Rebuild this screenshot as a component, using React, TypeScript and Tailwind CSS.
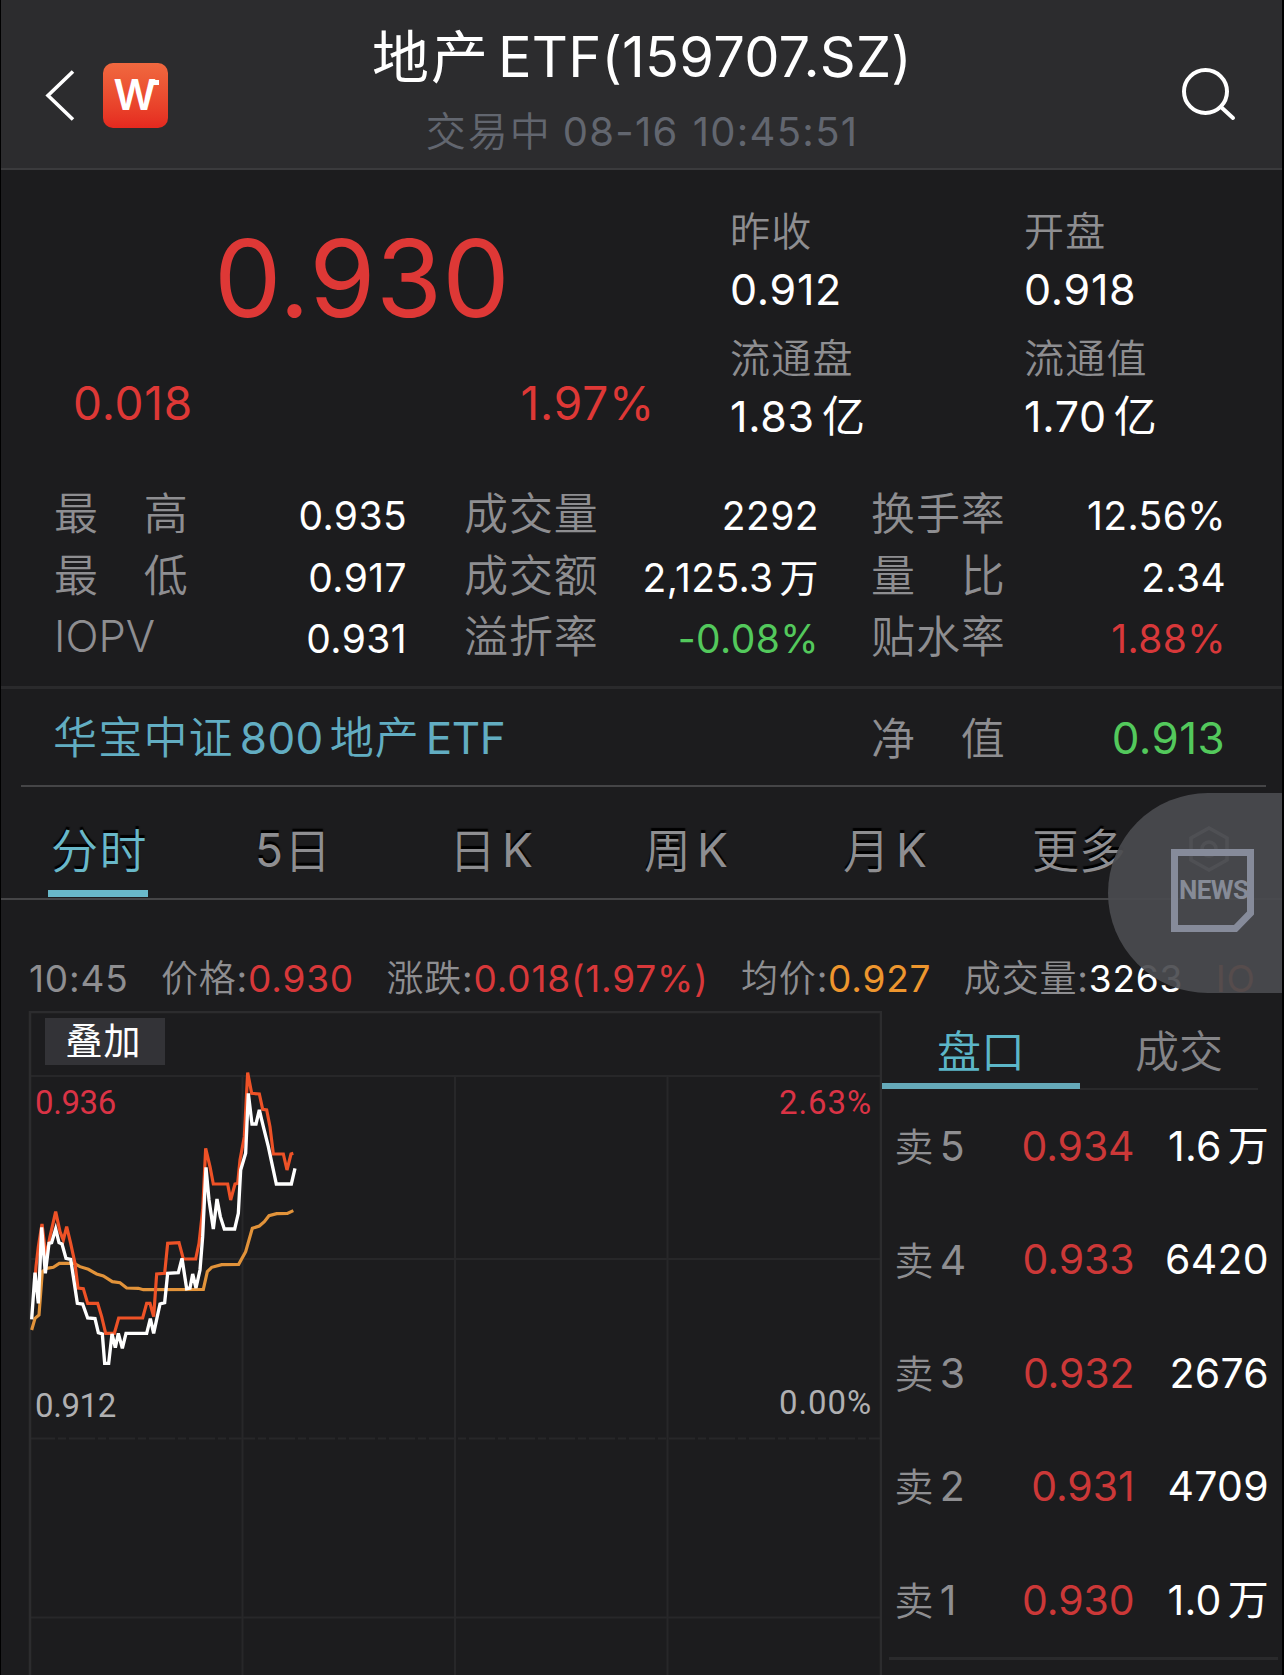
import { ReactNode } from 'react';

type Tone = 'white' | 'red' | 'green';

interface Stat {
  label: string;
  value: string;
  unit?: string;
  tone?: Tone;
}

interface Order {
  level: string;
  price: string;
  amount: string;
  unit?: string;
}

const toneClass: Record<Tone, string> = {
  white: 'text-white',
  red: 'text-[#d8383a]',
  green: 'text-[#53c95c]',
};

const summary: Stat[] = [
  { label: '昨收', value: '0.912' },
  { label: '开盘', value: '0.918' },
  { label: '流通盘', value: '1.83', unit: '亿' },
  { label: '流通值', value: '1.70', unit: '亿' },
];

const stats: Stat[] = [
  { label: '最　高', value: '0.935' },
  { label: '成交量', value: '2292' },
  { label: '换手率', value: '12.56%' },
  { label: '最　低', value: '0.917' },
  { label: '成交额', value: '2,125.3', unit: '万' },
  { label: '量　比', value: '2.34' },
  { label: 'IOPV', value: '0.931' },
  { label: '溢折率', value: '-0.08%', tone: 'green' },
  { label: '贴水率', value: '1.88%', tone: 'red' },
];

const periods = [['5', '日'], ['日', 'K'], ['周', 'K'], ['月', 'K'], ['更多']];

const orders: Order[] = [
  { level: '5', price: '0.934', amount: '1.6', unit: '万' },
  { level: '4', price: '0.933', amount: '6420' },
  { level: '3', price: '0.932', amount: '2676' },
  { level: '2', price: '0.931', amount: '4709' },
  { level: '1', price: '0.930', amount: '1.0', unit: '万' },
];

const priceLine =
  '95,808 105,668 115,760 125,532 136,670 147,580 155,578 167,537 177,578 186,582 198,625 212,628 220,680 232,760 248,762 263,804 285,806 295,848 307,852 314,940 326,940 336,852 346,893 355,850 367,895 378,850 440,850 451,806 461,850 480,762 494,758 503,670 535,668 546,625 560,716 570,714 578,672 588,714 600,660 608,560 618,352 627,450 640,537 651,447 661,500 673,537 704,537 715,490 722,360 737,310 745,130 756,222 768,222 778,180 790,230 805,290 829,402 874,402 885,355';
const indexLine =
  '105,690 108,650 115,590 126,522 138,620 150,560 167,485 180,545 190,570 200,530 212,580 225,640 234,714 250,716 263,760 293,760 305,800 317,850 343,850 356,804 428,804 440,760 450,760 461,800 470,672 494,670 503,580 537,578 550,627 587,627 597,580 608,480 617,295 630,350 640,402 683,402 692,450 705,402 713,400 720,330 733,260 743,68 755,130 778,132 788,178 800,180 810,230 820,312 850,312 861,360 873,312 880,310';
const averageLine =
  '95,840 105,805 117,795 127,665 140,655 160,652 178,640 222,640 240,650 265,658 290,672 310,678 337,695 360,698 380,714 415,715 430,719 610,718 622,665 635,652 665,644 716,643 737,605 757,535 778,528 793,515 807,497 830,491 862,490 880,482';

const Header = () => (
  <header className="flex h-[170px] items-start justify-between border-b-2 border-[#3b3b3d] bg-[#2c2c2e]">
    <div className="flex w-[300px] items-center pl-[44px] pt-[62px]">
      <svg width="32" height="66" viewBox="0 0 32 66" fill="none" stroke="#fff" strokeWidth="3.6">
        <path d="M29 9.500 4 33.500l25 24" />
      </svg>
      <div className="relative ml-[27px] flex h-[65px] w-[65px] items-center justify-center rounded-[10px] bg-gradient-to-b from-[#f0683f] to-[#e5281f]">
        <span className="pr-[1px] text-[42px] leading-none font-semibold text-white">W</span>
        <span className="absolute top-[17px] right-[9px] h-[5px] w-[7px] bg-white" />
      </div>
    </div>
    <div className="flex flex-col items-center pt-[25px]">
      <h1 className="flex gap-[8px] text-[56px] leading-[65px] font-normal text-white">
        <span className="text-[57px] tracking-[2px]">地产</span>
        <span className="tracking-[0.2px]">ETF(159707.SZ)</span>
      </h1>
      <div className="mt-[18px] flex text-[40px] leading-[48px] tracking-[1.3px] text-[#62666f]">
        <span className="font-[350] tracking-[2px]">交易中</span>
        <span className="ml-[11px]">08-16</span>
        <span className="ml-[14px]">10:45:51</span>
      </div>
    </div>
    <div className="flex w-[300px] justify-end pt-[64px] pr-[46px]">
      <svg width="58" height="58" viewBox="0 0 58 58" fill="none" stroke="#fff" strokeWidth="4">
        <circle cx="25.5" cy="27.5" r="21.5" />
        <path d="M41 43 53 54" strokeLinecap="round" />
      </svg>
    </div>
  </header>
);

const Quote = () => (
  <section className="flex h-[312px]">
    <div className="w-[724px] pt-[48px] text-[#de3836]">
      <div className="text-center text-[107px] leading-[120px] tracking-[0.2px]">0.930</div>
      <div className="mt-[40px] flex justify-between pr-[69px] pl-[73px] text-[46px] leading-[50px] tracking-[0.8px]">
        <span>0.018</span>
        <span>1.97%</span>
      </div>
    </div>
    <div className="ml-[6px] grid grid-cols-[294px_1fr] content-start gap-y-[8.5px] pt-[34px]">
      {summary.map((item) => (
        <div key={item.label}>
          <div className="text-[40px] leading-[56px] font-[350] tracking-[1.3px] text-[#8e8e91]">{item.label}</div>
          <div className="-mt-[2px] flex gap-[7px] pb-[2px] text-[43px] leading-[62px] tracking-[0.7px] text-white">
            <span>{item.value}</span>
            {item.unit && <span>{item.unit}</span>}
          </div>
        </div>
      ))}
    </div>
  </section>
);

const Stats = () => (
  <section className="grid auto-rows-[61.5px] grid-cols-[353px_355px_355px] border-b-[3px] border-[#2a2a2c] pb-[19.5px] pl-[54px]">
    {stats.map((item, index) => (
      <div
        key={item.label}
        className={`flex justify-between leading-[61px] ${index % 3 === 0 ? '' : index % 3 === 1 ? 'ml-[57px] -mr-[57px]' : 'ml-[109px] -mr-[109px]'}`}
      >
        <span className={`text-[#8e8e91] ${item.label === 'IOPV' ? 'pt-px text-[43.5px] font-light' : 'pt-[2px] text-[44px] font-[350] tracking-[0.9px]'}`}>
          {item.label}
        </span>
        <span className={`flex gap-[6px] pt-[3px] text-[39px] tracking-[0.4px] ${toneClass[item.tone ?? 'white']}`}>
          <span>{item.value}</span>
          {item.unit && <span>{item.unit}</span>}
        </span>
      </div>
    ))}
  </section>
);

const Fund = () => (
  <section className="mr-[18px] ml-[21px] flex h-[97.5px] items-center border-b-2 border-[#454547] pt-[2px] pl-[32px] text-[44px] leading-[96px]">
    <div className="flex w-[818px] gap-[6px] text-[#62adc2]">
      <span className="font-[350] tracking-[1.2px]">华宝中证</span>
      <span className="tracking-[0.4px]">800</span>
      <span className="font-[350] tracking-[1px]">地产</span>
      <span className="tracking-[-0.4px]">ETF</span>
    </div>
    <span className="pt-[2px] font-[350] tracking-[0.9px] text-[#8e8e91]">净　值</span>
    <span className="ml-auto pr-[41px] tracking-[0.4px] text-[#53c95c]">0.913</span>
  </section>
);

const Periods = () => (
  <nav className="grid h-[113px] grid-cols-[207px_194px_195px_199px_189px_156px_1fr] border-b-2 border-[#454547] pl-[48px] text-[47px] leading-[127px] text-[#8e8e91] [text-shadow:0_-3px_1px_#000]">
    <div className="text-[#69b8c9]">
      <div className="h-[103px] pl-[3px] font-[350] tracking-[1.6px]">分时</div>
      <div className="h-[7px] w-[100px] bg-[#69b8c9]" />
    </div>
    {periods.map((parts) => (
      <div key={parts.join('')} className={`flex font-[350] ${parts[0] === '5' ? 'gap-[1px]' : 'gap-[6px]'}`}>
        {parts.map((part) => (
          <span key={part} className={part === 'K' || part === '5' ? 'text-[46px] font-normal' : ''}>{part}</span>
        ))}
      </div>
    ))}
    <svg className="mt-[38px]" width="42" height="48" viewBox="0 0 42 48" fill="none" stroke="#8e8e91" strokeWidth="3.5">
      <path d="M21 3 39 13v22L21 45 3 35V13z" />
      <circle cx="21" cy="24" r="7" />
    </svg>
  </nav>
);

const Field = ({ label, children }: { label: string; children: ReactNode }) => (
  <div className="flex">
    <span className="font-[350]">{label}</span>
    <span>:</span>
    {children}
  </div>
);

const TickInfo = () => (
  <section className="flex h-[111.5px] gap-[32.5px] overflow-hidden pt-[57px] pl-[29px] text-[37px] leading-[44px] tracking-[0.8px] whitespace-nowrap text-[#8e8e91]">
    <span>10:45</span>
    <Field label="价格"><span className="text-[#d8383a]">0.930</span></Field>
    <Field label="涨跌"><span className="text-[#d8383a]">0.018(1.97%)</span></Field>
    <Field label="均价"><span className="text-[#ee962e]">0.927</span></Field>
    <Field label="成交量"><span className="text-white">3263</span></Field>
    <span className="text-[#e0582f]">IO</span>
  </section>
);

const Chart = () => (
  <div className="relative ml-[28px] h-[664px] w-[854px]">
    <svg width="854" height="664" viewBox="28 1011 854 664" fill="none">
      <g stroke="#272729" strokeWidth="2">
        <path d="M29 1076H881M29 1259H881M29 1617.500H881" />
        <path d="M29 1438.500H881" strokeDasharray="26 3 8 3" />
        <path d="M242.500 1076V1676M455 1076V1676M667.500 1076V1676" />
      </g>
      <path d="M30 1676V1012H881V1676" stroke="#2c2c2e" strokeWidth="2.500" />
      <g transform="translate(0 1050) scale(0.33333)" strokeWidth="9.500" strokeLinejoin="miter">
        <polyline points={averageLine} stroke="#e2933a" />
        <polyline points={indexLine} stroke="#ee5227" />
        <polyline points={priceLine} stroke="#fff" strokeWidth="10" />
      </g>
    </svg>
    <button className="absolute top-[7px] left-[17px] h-[47px] w-[120px] bg-[#333337] pr-[3px] text-[37px] leading-[47px] tracking-[1px] text-white">叠加</button>
    <div className="absolute inset-x-0 top-[72px] flex justify-between pr-[10px] pl-[7px] font-['Roboto',sans-serif] text-[33px] leading-[40px] text-[#da3345]">
      <span className="tracking-[-0.4px]">0.936</span>
      <span className="tracking-[0.9px]">2.63%</span>
    </div>
    <div className="absolute inset-x-0 top-[372px] flex justify-between pr-[10px] pl-[7px] font-['Roboto',sans-serif] text-[33px] leading-[40px] text-[#b0b0b2]">
      <span className="pt-[3px] tracking-[-0.4px]">0.912</span>
      <span className="tracking-[0.9px]">0.00%</span>
    </div>
  </div>
);

const OrderBook = () => (
  <div className="w-[402px]">
    <div className="flex text-center text-[44px] leading-[82px] font-[350]">
      <div className="h-[72px] w-[198px] text-[#5cb6c8]">盘口</div>
      <div className="h-[72px] w-[198px] text-[#858588]">成交</div>
    </div>
    <div className="flex">
      <div className="h-[6px] w-[198px] bg-[#65a9b9]" />
      <div className="h-[7px] w-[178px] border-b-2 border-[#29292b]" />
    </div>
    {orders.map((order) => (
      <div key={order.level} className="flex h-[113.4px] items-center pl-[12.5px] text-[41px] tracking-[0.3px]">
        <div className="flex w-[96px] gap-[6px] text-[#8e8e91]">
          <span className="text-[39px] leading-[61px] font-[350]">卖</span>
          <span className="leading-[61px]">{order.level}</span>
        </div>
        <span className="w-[144px] text-right tracking-[-0.1px] text-[#cc3838]">{order.price}</span>
        <span className="flex w-[134.5px] justify-end gap-[6px] text-white">
          <span>{order.amount}</span>
          {order.unit && <span>{order.unit}</span>}
        </span>
      </div>
    ))}
    <div className="mr-[6px] ml-[7px] h-[3px] bg-[#2a2a2c]" />
  </div>
);

// Floating shortcut docked to the right edge
const NewsButton = () => (
  <div className="absolute top-[793px] right-[2px] flex h-[200px] w-[174px] items-start rounded-l-[100px] bg-[#4a4b4f]/92 pt-[55px] pl-[62px]">
    <svg width="86" height="86" viewBox="0 0 86 86" fill="none">
      <path d="M4.500 4.500H80.500V65L65.500 80.500H4.500Z" stroke="#868b9a" strokeWidth="7" />
      <text x="9" y="50.500" className="font-['Roboto',sans-serif]" letterSpacing="-0.6" fill="#868b97" fontSize="26" fontWeight="700">NEWS</text>
    </svg>
  </div>
);

const App = () => (
  <div className="relative h-[1675px] w-[1284px] overflow-hidden bg-[#1c1c1e] font-['Inter','Noto_Sans_CJK_SC',sans-serif]">
    <Header />
    <Quote />
    <Stats />
    <Fund />
    <Periods />
    <TickInfo />
    <main className="flex">
      <Chart />
      <OrderBook />
    </main>
    <NewsButton />
    <div className="pointer-events-none absolute inset-0 border-r-2 border-l border-black" />
  </div>
);

export default App;
